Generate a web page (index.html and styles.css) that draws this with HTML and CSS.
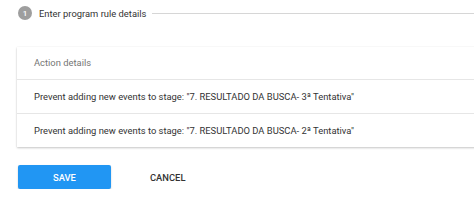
FILE: index.html
```html
<!DOCTYPE html>
<html lang="en">

<head>
    <meta charset="UTF-8">
    <meta name="viewport" content="width=device-width, initial-scale=1.0">
    <title>Program rule</title>
    <link rel="stylesheet" href="styles.css">
</head>

<body>
    <div class="step">
        <span class="step-num">1</span>
        <span class="step-label">Enter program rule details</span>
        <span class="step-line"></span>
    </div>

    <div class="card">
        <div class="card-head">Action details</div>
        <div class="card-row">Prevent adding new events to stage: "7. RESULTADO DA BUSCA- 3ª Tentativa"</div>
        <div class="card-row">Prevent adding new events to stage: "7. RESULTADO DA BUSCA- 2ª Tentativa"</div>
    </div>

    <div class="actions">
        <button class="btn-save">SAVE</button>
        <button class="btn-cancel">CANCEL</button>
    </div>
</body>

</html>
```

FILE: styles.css
```css
body {
    margin: 0;
    padding: 6px 0 0 18px;
    font-family: Roboto, "Noto Sans", sans-serif;
    background-color: #fff;
    overflow: hidden;
}

.step {
    display: flex;
    align-items: center;
    height: 14px;
}

.step-num {
    display: flex;
    align-items: center;
    justify-content: center;
    width: 14px;
    height: 14px;
    border-radius: 50%;
    background-color: #9e9e9e;
    color: #fff;
    font-size: 8px;
    font-weight: 500;
}

.step-label {
    margin-left: 7px;
    font-size: 9.4px;
    color: #333;
}

.step-line {
    flex: 1;
    height: 1px;
    margin-left: 6px;
    background-color: #d6d6d6;
}

.card {
    margin-top: 27px;
    margin-left: -1px;
    width: 460px;
    background-color: #fff;
    box-shadow: 0 1px 2px rgba(0, 0, 0, 0.22), 0 0 1px rgba(0, 0, 0, 0.08);
}

.card-head {
    height: 32px;
    line-height: 32px;
    padding-left: 17px;
    font-size: 9.4px;
    color: #757575;
    border-bottom: 1px solid #e6e6e6;
}

.card-row {
    height: 33px;
    line-height: 33px;
    padding-left: 17px;
    font-size: 9.4px;
    color: #333;
    border-bottom: 1px solid #e6e6e6;
}

.card-row:last-child {
    border-bottom: none;
}

.actions {
    display: flex;
    align-items: center;
    margin-top: 18px;
}

button {
    font-family: Roboto, "Noto Sans", sans-serif;
    font-size: 9.4px;
    font-weight: 500;
    border: none;
    cursor: pointer;
}

.btn-save {
    width: 93px;
    height: 24px;
    border-radius: 2px;
    background-color: #2196f3;
    color: #fff;
    box-shadow: 0 1px 2px rgba(0, 0, 0, 0.2);
}

.btn-cancel {
    margin-left: 27px;
    padding: 0 12px;
    height: 24px;
    background: none;
    color: #333;
}
```
